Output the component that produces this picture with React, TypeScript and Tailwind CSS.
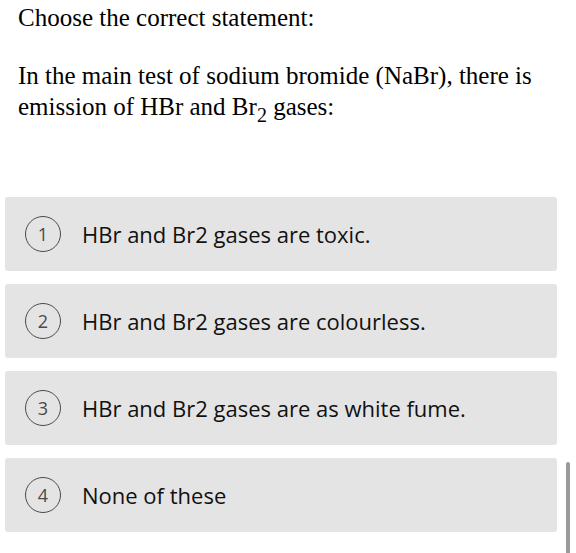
const options = [
  "HBr and Br2 gases are toxic.",
  "HBr and Br2 gases are colourless.",
  "HBr and Br2 gases are as white fume.",
  "None of these",
];

export default function App() {
  return (
    <div className="relative h-[553px] w-[576px] overflow-hidden bg-white">
      <div className="px-[18px] pt-[2px] font-['Liberation_Serif',serif] text-[25px] leading-[31px] text-black">
        <p>Choose the correct statement:</p>
        <p className="mt-[27px]">
          In the main test of sodium bromide (NaBr), there is
          <br />
          emission of HBr and Br<sub className="relative top-[0.05em] align-[-0.3em] text-[0.8em] leading-none">2</sub> gases:
        </p>
      </div>

      <div className="mt-[73px] flex w-[552px] flex-col gap-[13px] pl-[5px] font-['Open_Sans',sans-serif]">
        {options.map((text, i) => (
          <div
            key={i}
            className="flex h-[74px] w-[552px] items-center gap-[21px] rounded-[3px] bg-[#e4e4e4] pl-[20px]"
          >
            <span className="flex h-[36px] w-[36px] shrink-0 items-center justify-center rounded-full border-[1.5px] border-[#4a4a4a] text-[18px] text-[#4a4a4a]">
              {i + 1}
            </span>
            <span className="text-[22px] text-[#111]">{text}</span>
          </div>
        ))}
      </div>

      <div className="absolute right-[6px] top-[462px] h-[100px] w-[4px] rounded-full bg-[#9a9a9a]" />
    </div>
  );
}
